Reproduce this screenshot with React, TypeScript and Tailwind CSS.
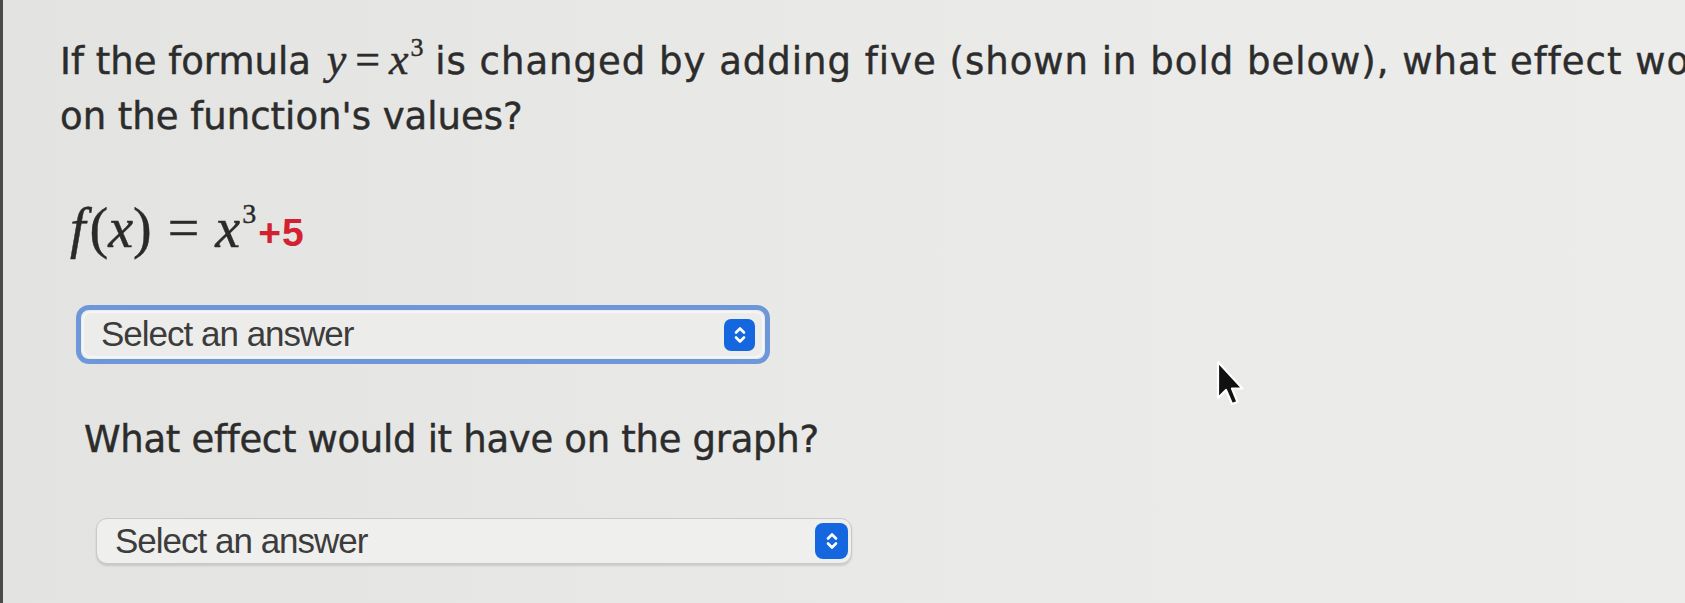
import React from "react";

function Chevrons() {
  return (
    <svg width="14" height="20" viewBox="0 0 14 20" fill="none">
      <path d="M3 7.5 L7 3.5 L11 7.5" stroke="white" strokeWidth="2.6" strokeLinecap="round" strokeLinejoin="round" />
      <path d="M3 12.5 L7 16.5 L11 12.5" stroke="white" strokeWidth="2.6" strokeLinecap="round" strokeLinejoin="round" />
    </svg>
  );
}

function Cursor() {
  return (
    <svg width="34" height="50" viewBox="0 0 34 50" className="absolute left-[1211px] top-[359px]">
      <path
        d="M4 3 L4 39 L12 31 L18 45 L23.5 43 L18 29.5 L28.5 29.5 Z"
        fill="#111"
        stroke="white"
        strokeWidth="2.2"
        strokeLinejoin="round"
      />
    </svg>
  );
}

const mathFont = { fontFamily: '"Liberation Serif", "DejaVu Serif", serif' };
const sans = { fontFamily: '"Liberation Sans", Arial, sans-serif' };

export default function App() {
  return (
    <div
      className="relative w-[1685px] h-[603px] overflow-hidden border-l-[3px] border-[#4a4a4a] bg-gradient-to-r from-[#e3e3e1] via-[#e9e9e7] to-[#ececea]"
      style={{ fontFamily: '"DejaVu Sans", Verdana, sans-serif' }}
    >
      <div className="pl-[57px] pt-[32px] text-[#2c2c2c] [-webkit-text-stroke:0.45px_#2c2c2c]">
        <div className="whitespace-nowrap text-[37px] leading-[55px]">
          If the formula{" "}
          <span className="ml-[4px] text-[44px] italic" style={mathFont}>
            y
          </span>
          <span className="mx-[9px] text-[44px]" style={mathFont}>
            =
          </span>
          <span className="text-[44px] italic" style={mathFont}>
            x
          </span>
          <sup className="relative -top-[18px] ml-[2px] text-[26px]" style={mathFont}>
            3
          </sup>{" "}
          <span className="tracking-[1px]">
            is changed by adding five (shown in bold below), what effect would it have
          </span>
        </div>
        <div className="whitespace-nowrap text-[37px] leading-[55px]">on the function's values?</div>

        <div className="mt-[52px] flex items-baseline pl-[10px] text-[#2a2a2a] leading-[64px]" style={mathFont}>
          <span className="text-[56px] italic">f</span>
          <span className="ml-[4px] text-[56px]">(</span>
          <span className="text-[56px] italic">x</span>
          <span className="text-[56px]">)</span>
          <span className="mx-[16px] text-[56px]">=</span>
          <span className="text-[56px] italic">x</span>
          <sup className="relative -top-[24px] ml-[2px] text-[28px]">3</sup>
          <span
            className="relative -top-[1px] ml-[2px] text-[39px] tracking-[1px] font-bold text-[#d2222f] [-webkit-text-stroke:0px]"
            style={sans}
          >
            +5
          </span>
        </div>

        <div className="mt-[39px] ml-[16px] w-[694px] h-[59px] rounded-[13px] border-[5px] border-[#6e97da] bg-[#ecedeb] p-[1px] [-webkit-text-stroke:0px]">
          <div className="flex h-full items-center justify-between rounded-[9px] border-[2px] border-[#f4f5f6] pl-[17px] pr-[7px]">
            <span className="text-[35px] tracking-[-1px] text-[#3c3c3c]" style={sans}>
              Select an answer
            </span>
            <div className="flex h-[32px] w-[31px] items-center justify-center rounded-[7px] bg-[#1567e0]">
              <Chevrons />
            </div>
          </div>
        </div>

        <div className="mt-[48px] ml-[24px] whitespace-nowrap text-[37px] leading-[55px] tracking-[-0.3px]">
          What effect would it have on the graph?
        </div>

        <div className="mt-[51px] ml-[36px] flex w-[756px] h-[46px] items-center justify-between rounded-[11px] border border-[#c9c9c7] bg-[#efefed] pl-[18px] pr-[3px] shadow-[0_2px_2px_rgba(0,0,0,0.12)] [-webkit-text-stroke:0px]">
          <span className="text-[35px] tracking-[-1px] text-[#3c3c3c]" style={sans}>
            Select an answer
          </span>
          <div className="flex h-[36px] w-[33px] items-center justify-center rounded-[8px] bg-[#1567e0]">
            <Chevrons />
          </div>
        </div>
      </div>
      <Cursor />
    </div>
  );
}
